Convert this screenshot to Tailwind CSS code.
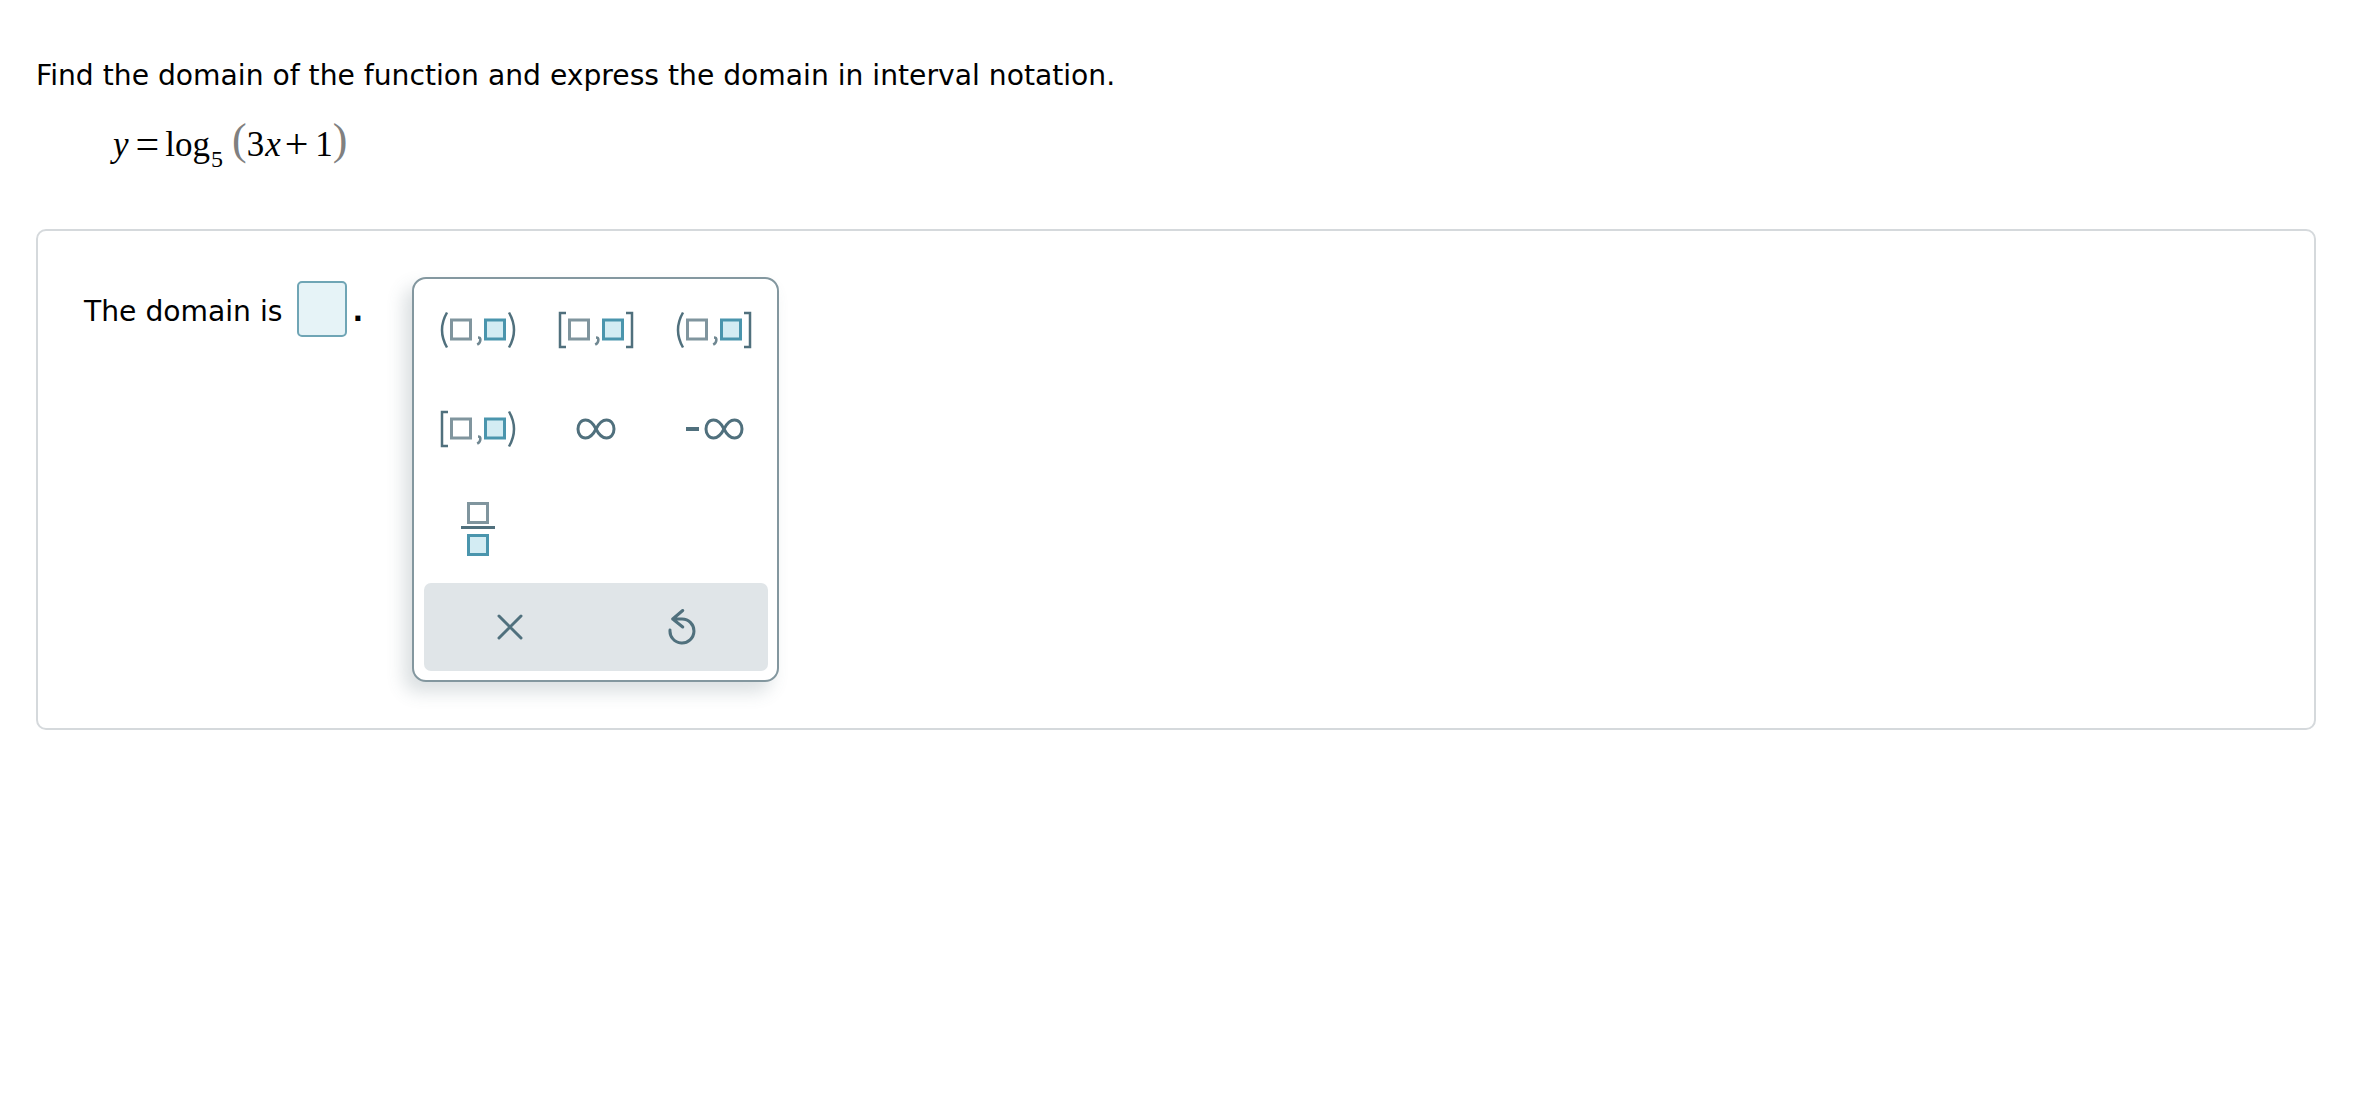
<!DOCTYPE html>
<html lang="en">
<head>
  <meta charset="UTF-8">
  <title>Domain question</title>
  <script src="https://cdn.jsdelivr.net/npm/@tailwindcss/browser@4"></script>
</head>
<body class="bg-white text-black font-['DejaVu_Sans',sans-serif] text-[28.2px]">
  <svg class="hidden">
    <defs>
      <g id="slots">
        <rect x="13.500" y="10" width="19" height="19" fill="#fff" stroke="#80959e" stroke-width="3"/>
        <rect x="47.500" y="10" width="19" height="19" fill="#d3ecf3" stroke="#4a95ad" stroke-width="3"/>
        <path d="M40 27.500c1.600 0 2.400.8 2.400 2.200 0 2.200-1.200 3.900-3.200 5" fill="none" stroke="#6f8791" stroke-width="2.500"/>
      </g>
    </defs>
  </svg>

  <main class="pl-[36px] pr-[38px] pt-[58px]">
    <p class="leading-[36px]">Find the domain of the function and express the domain in interval notation.</p>

    <p class="mt-[26px] pl-[77px] h-[64px] font-['Liberation_Serif',serif] text-[35px] leading-[48px] flex items-baseline">
      <i>y</i><span class="ml-[7px] text-[42px] leading-none relative top-[2px]">=</span><span class="ml-[6px]">log</span><span class="text-[24px] relative top-[11px] leading-none ml-[1px]">5</span>
      <span class="text-[#808080] text-[44px] leading-none ml-[9px] relative top-[-2px]">(</span><span>3</span><i class="ml-[1px]">x</i><span class="ml-[4px] text-[42px] leading-none relative top-[2px]">+</span><span class="ml-[7px]">1</span><span class="text-[#808080] text-[44px] leading-none relative top-[-2px]">)</span>
    </p>

    <section class="mt-[45px] border-2 border-[#d5d9dc] rounded-[10px] p-[46px] flex items-start">
      <div class="flex items-start mt-[4px]">
        <span class="mt-[13px] leading-[36px]">The domain is</span>
        <div class="w-[50px] h-[56px] ml-[15px] bg-[#e6f3f7] border-2 border-[#6fa5b5] rounded-[5px]"></div>
        <span class="mt-[13px] leading-[36px] ml-[5px] font-bold">.</span>
      </div>

      <div class="ml-[49px] w-[367px] h-[405px] bg-white border-2 border-[#83979f] rounded-[14px] shadow-[-8px_10px_18px_rgba(70,95,105,0.2)] pt-[1px] flex flex-col items-center">
        <div class="grid grid-cols-[repeat(3,118px)] auto-rows-[99px] place-items-center">
          <svg width="80" height="40" viewBox="0 0 80 40" fill="none" stroke="#50707d" stroke-width="2.500">
            <use href="#slots"/>
            <path d="M9 2.500Q-1 20 9 37.500M71 2.500Q81 20 71 37.500"/>
          </svg>
          <svg width="80" height="40" viewBox="0 0 80 40" fill="none" stroke="#50707d" stroke-width="2.500">
            <use href="#slots"/>
            <path d="M10 3H4V37H10M70 3H76V37H70"/>
          </svg>
          <svg width="80" height="40" viewBox="0 0 80 40" fill="none" stroke="#50707d" stroke-width="2.500">
            <use href="#slots"/>
            <path d="M9 2.500Q-1 20 9 37.500M70 3H76V37H70"/>
          </svg>

          <svg width="80" height="40" viewBox="0 0 80 40" fill="none" stroke="#50707d" stroke-width="2.500">
            <use href="#slots"/>
            <path d="M10 3H4V37H10M71 2.500Q81 20 71 37.500"/>
          </svg>
          <svg width="40" height="24" viewBox="0 0 40 24" fill="none" stroke="#50707d" stroke-width="3">
            <path d="M20 12C17 6 14 3 9.500 3C5 3 2 7 2 12C2 17 5 21 9.500 21C14 21 17 18 20 12C23 6 26 3 30.500 3C35 3 38 7 38 12C38 17 35 21 30.500 21C26 21 23 18 20 12Z"/>
          </svg>
          <svg width="60" height="24" viewBox="0 0 60 24" fill="none" stroke="#50707d" stroke-width="3">
            <path d="M2 12H15" stroke-width="4"/>
            <path d="M40 12C37 6 34 3 29.500 3C25 3 22 7 22 12C22 17 25 21 29.500 21C34 21 37 18 40 12C43 6 46 3 50.500 3C55 3 58 7 58 12C58 17 55 21 50.500 21C46 21 43 18 40 12Z"/>
          </svg>

          <svg width="40" height="60" viewBox="0 0 40 60" fill="none" stroke-width="3" class="ml-[3px]">
            <rect x="9.500" y="5.500" width="19" height="19" fill="#fff" stroke="#80959e"/>
            <path d="M2 29.500H36" stroke="#50707d"/>
            <rect x="9.500" y="37.500" width="19" height="19" fill="#d3ecf3" stroke="#4a95ad"/>
          </svg>
        </div>

        <div class="mt-[6px] w-[344px] h-[88px] bg-[#e0e5e8] rounded-[7px] grid grid-cols-2 place-items-center">
          <svg width="28" height="28" viewBox="0 0 28 28" fill="none" stroke="#50707d" stroke-width="3" stroke-linecap="round">
            <path d="M3 3L25 25M25 3L3 25"/>
          </svg>
          <svg width="30" height="36" viewBox="0 0 30 36" fill="none" stroke="#50707d" stroke-width="3" stroke-linecap="round" stroke-linejoin="round">
            <path d="M15.700 1.500L5.700 10L15.700 18M5.700 10H15A12 12 0 1 1 3 21"/>
          </svg>
        </div>
      </div>
    </section>
  </main>
</body>
</html>
